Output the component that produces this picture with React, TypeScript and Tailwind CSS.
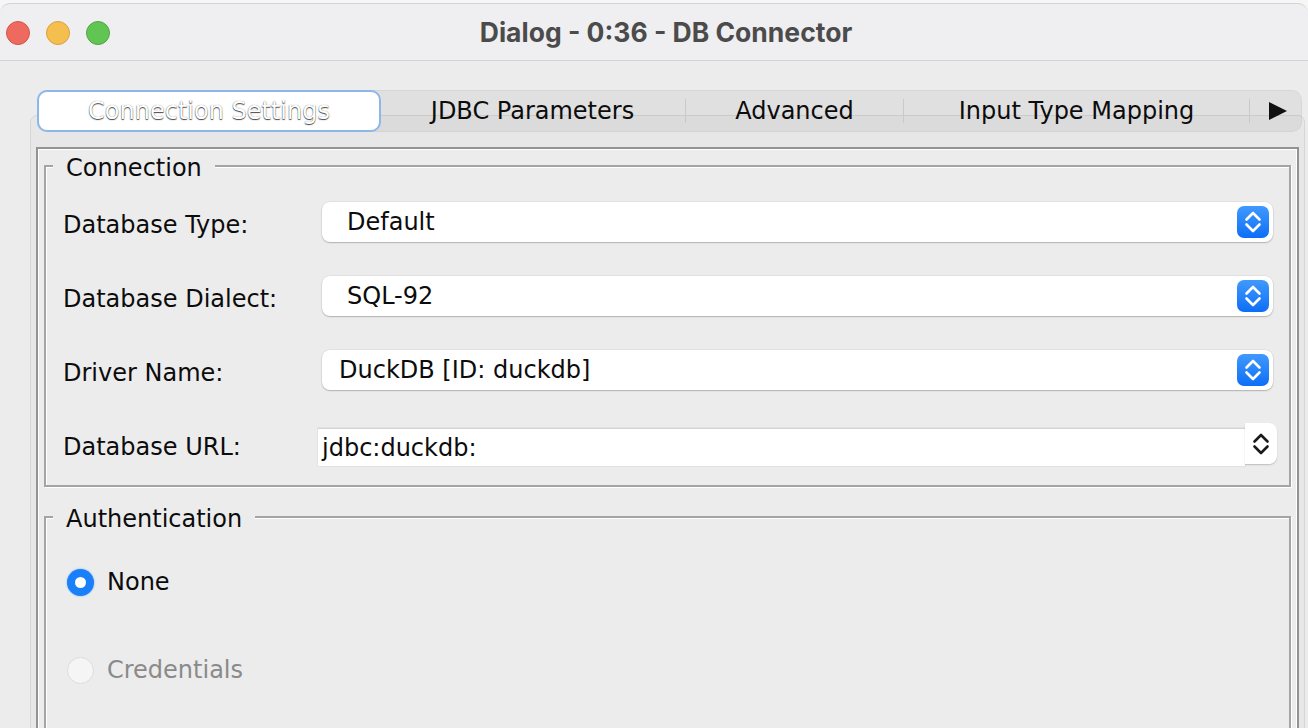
import React from "react";

// Up/down chevron pair used by the combo box buttons
const Chevrons = ({ color }: { color: string }) => (
  <svg
    width="32"
    height="32"
    viewBox="0 0 32 32"
    fill="none"
    stroke={color}
    strokeWidth="2.6"
    strokeLinecap="round"
    strokeLinejoin="round"
  >
    <polyline points="9.5,13.5 16,7 22.5,13.5" />
    <polyline points="9.5,18.5 16,25 22.5,18.5" />
  </svg>
);

interface SelectProps {
  value: string;
  pad: string;
}

const Select = ({ value, pad }: SelectProps) => (
  <div className="h-[40px] bg-white rounded-[8px] shadow-[0_1px_1.5px_rgba(0,0,0,0.22),0_0_0_0.5px_rgba(0,0,0,0.08)] flex items-center justify-between pr-[4px]">
    <span className={pad}>{value}</span>
    <div className="w-[32px] h-[32px] rounded-[7px] bg-linear-to-b from-[#3f99fd] to-[#0b6ef6] flex items-center justify-center">
      <Chevrons color="#ffffff" />
    </div>
  </div>
);

const rows = [
  { label: "Database Type:", value: "Default", pad: "pl-[25px]" },
  { label: "Database Dialect:", value: "SQL-92", pad: "pl-[25px]" },
  { label: "Driver Name:", value: "DuckDB [ID: duckdb]", pad: "pl-[17px]" },
];

const TabSep = () => <div className="w-px h-[24px] self-center bg-[#c9c9c9]" />;

const App = () => {
  return (
    <div className="w-[1308px] h-[728px] overflow-hidden bg-[#ececec] font-['DejaVu_Sans',sans-serif] text-[24px] leading-[28px] text-[#0c0c0c]">
      {/* window title bar */}
      <div className="pt-[3px] bg-[#f6f6f6]">
        <div className="h-[58px] bg-[#efeef0] border-t border-b border-[#d3d3d3] rounded-t-[10px] flex items-center">
          <div className="flex items-center gap-[16px] pl-[6px] mt-[1px]">
            <span className="w-[24px] h-[24px] rounded-full bg-[#ee6a5f] border border-[#d5554a]" />
            <span className="w-[24px] h-[24px] rounded-full bg-[#f5bf4f] border border-[#d8a23f]" />
            <span className="w-[24px] h-[24px] rounded-full bg-[#61c554] border border-[#4fa83f]" />
          </div>
          <div className="flex-1 text-center pr-[86px] font-['Inter',sans-serif] font-bold text-[26.5px] text-[#4b4b4b] -mt-[1px]">
            Dialog - 0:36 - DB Connector
          </div>
        </div>
      </div>

      <div className="pl-[30px] pr-[3px]">
        {/* tab strip */}
        <div className="relative z-10 mt-[29px] ml-[7px] mr-[3px] h-[42px] rounded-[10px] bg-black/[0.05] border border-black/[0.04] flex items-stretch">
          <div className="w-[344px] -m-px bg-white border-2 border-[#8db7eb] rounded-[10px] flex items-center justify-center text-white [text-shadow:0_1px_1px_rgba(0,0,0,0.7),0_0_1px_rgba(0,0,0,0.5)]">
            Connection Settings
          </div>
          <div className="w-[305px] flex items-center justify-center">JDBC Parameters</div>
          <TabSep />
          <div className="w-[217px] flex items-center justify-center">Advanced</div>
          <TabSep />
          <div className="w-[345px] flex items-center justify-center">Input Type Mapping</div>
          <TabSep />
          <div className="flex-1 flex items-center justify-center pl-[4px]">
            <svg width="18" height="18" viewBox="0 0 18 18">
              <polygon points="0,0 18,9 0,18" fill="#111" />
            </svg>
          </div>
        </div>

        {/* tab content panel */}
        <div className="-mt-[17px] h-[620px] border border-[#d6d6d6] rounded-t-[7px] bg-[#e7e7e7] px-[5px] pt-[31px]">
          <div className="h-full bg-[#ececec] border-2 border-[#939393] shadow-[inset_0_0_0_1px_#ffffff] px-[6px] pt-[1px]">
            <fieldset className="m-0 p-0 min-w-0 border-2 border-[#a4a4a4] shadow-[1px_1px_0_#ffffff,inset_1px_1px_0_#ffffff]">
              <legend className="ml-[7px] px-[13px] pt-[4px] bg-[#ececec]">Connection</legend>
              <div className="grid grid-cols-[259px_1fr] gap-y-[34px] items-center pl-[17px] pr-[16px] pt-[20px] pb-[21px]">
                {rows.map((row) => (
                  <React.Fragment key={row.label}>
                    <span className="pt-[5px]">{row.label}</span>
                    <Select value={row.value} pad={row.pad} />
                  </React.Fragment>
                ))}
                <span className="pt-[5px]">Database URL:</span>
                <div className="-mx-[4px] h-[40px] flex items-start">
                  <div className="flex-1 mt-[4px] h-[38px] bg-white border-t border-[#d4d4d4] shadow-[0_0_0_0.5px_rgba(0,0,0,0.08)] flex items-center pl-[4px]">
                    jdbc:duckdb:
                  </div>
                  <div className="w-[32px] h-[41px] -mt-px bg-white rounded-r-[8px] shadow-[0_1px_1.5px_rgba(0,0,0,0.2)] flex items-center justify-center">
                    <Chevrons color="#1a1a1a" />
                  </div>
                </div>
              </div>
            </fieldset>

            <fieldset className="mt-[14px] mx-0 mb-0 p-0 min-w-0 h-[300px] border-2 border-[#a4a4a4] shadow-[1px_1px_0_#ffffff,inset_1px_1px_0_#ffffff]">
              <legend className="ml-[7px] px-[13px] pt-[4px] bg-[#ececec]">Authentication</legend>
              <div className="flex flex-col gap-[60px] pl-[21px] pt-[35px]">
                <div className="flex items-center h-[28px]">
                  <span className="w-[27px] h-[27px] rounded-full bg-[#1a80fa] shadow-[0_0_2px_rgba(26,128,250,0.6)] flex items-center justify-center">
                    <span className="w-[11px] h-[11px] rounded-full bg-white" />
                  </span>
                  <span className="ml-[13px]">None</span>
                </div>
                <div className="flex items-center h-[28px]">
                  <span className="w-[27px] h-[27px] rounded-full bg-[#f5f5f5] border border-[#dcdcdc]" />
                  <span className="ml-[13px] text-[#8a8a8a]">Credentials</span>
                </div>
              </div>
            </fieldset>
          </div>
        </div>
      </div>
    </div>
  );
};

export default App;
